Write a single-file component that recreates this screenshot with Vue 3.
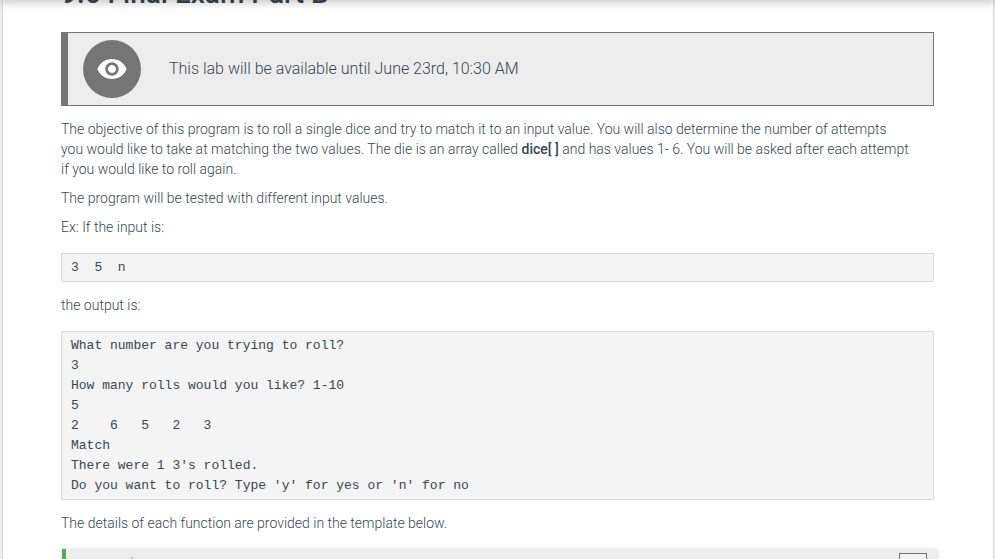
<template>
  <div class="page">
    <header class="top-bar"></header>
    <main class="content">
      <h1 class="title">9.6 Final Exam Part B</h1>

      <div class="notice">
        <div class="notice-icon">
          <svg viewBox="0 0 24 24" width="32" height="32" fill="#fff" aria-hidden="true">
            <path d="M12 4.5C7 4.5 2.73 7.61 1 12c1.73 4.39 6 7.5 11 7.5s9.27-3.11 11-7.5c-1.73-4.39-6-7.5-11-7.5zM12 17c-2.76 0-5-2.24-5-5s2.24-5 5-5 5 2.24 5 5-2.24 5-5 5zm0-8c-1.66 0-3 1.34-3 3s1.34 3 3 3 3-1.34 3-3-1.34-3-3-3z" />
          </svg>
        </div>
        <span class="notice-text">This lab will be available until June 23rd, 10:30 AM</span>
      </div>

      <p>
        The objective of this program is to roll a single dice and try to match it to an input value.
        You will also determine the number of attempts<br>
        you would like to take at matching the two values.
        The die is an array called <b>dice[ ]</b> and has values 1- 6.
        You will be asked after each attempt<br>
        if you would like to roll again.
      </p>
      <p>The program will be tested with different input values.</p>
      <p>Ex: If the input is:</p>
      <pre class="console">{{ sampleInput }}</pre>
      <p>the output is:</p>
      <pre class="console">{{ sampleOutput }}</pre>
      <p>The details of each function are provided in the template below.</p>

      <section class="activity">
        <span class="divider"></span>
        <span class="score"></span>
      </section>
    </main>
  </div>
</template>

<script setup>
const sampleInput = '3  5  n'

const sampleOutput = [
  'What number are you trying to roll?',
  '3',
  'How many rolls would you like? 1-10',
  '5',
  '2    6   5   2   3',
  'Match',
  "There were 1 3's rolled.",
  "Do you want to roll? Type 'y' for yes or 'n' for no"
].join('\n')
</script>

<style>
body {
  margin: 0;
  background: #f0f0f0;
}
</style>

<style scoped>
.page {
  height: 100vh;
  overflow: hidden;
  box-sizing: border-box;
  padding: 0 2px 0 3px;
  font-family: Roboto, "Liberation Sans", sans-serif;
  font-weight: 300;
  color: #37474f;
}
.top-bar {
  position: fixed;
  top: -10px;
  left: 0;
  right: 0;
  height: 10px;
  box-shadow: 0 2px 10px rgba(0, 0, 0, 0.26);
}
.content {
  box-sizing: border-box;
  min-height: 100%;
  padding: 0 59px 0 58px;
  background: #fff;
  box-shadow: 0 0 2px rgba(0, 0, 0, 0.3);
  display: flow-root;
}
.title {
  margin: -22px 0 22px;
  font-size: 28px;
  line-height: 32px;
  font-weight: 500;
}
.notice {
  display: flex;
  align-items: center;
  height: 72px;
  margin-bottom: 13px;
  padding-left: 15px;
  background: #ededed;
  border: 1px solid #757575;
  border-left-width: 7px;
}
.notice-icon {
  display: flex;
  align-items: center;
  justify-content: center;
  width: 58px;
  height: 58px;
  margin-right: 28px;
  border-radius: 50%;
  background: #757575;
}
.notice-text {
  font-size: 16px;
  line-height: 20px;
}
p {
  margin: 0 0 9px;
  font-size: 14px;
  line-height: 20px;
}
b {
  font-weight: 500;
}
.console {
  margin: 16px 0 13px;
  padding: 4px 9px 3px;
  border: 1px solid #d9d9d9;
  border-radius: 1px;
  background: #f4f4f4;
  font-family: "Liberation Mono", monospace;
  font-size: 13px;
  font-weight: 400;
  line-height: 20px;
}
.activity {
  display: flex;
  justify-content: space-between;
  height: 60px;
  margin: 16px -3px 0 1px;
  padding: 4px 10px 0 65px;
  border-left: 4px solid #4caf50;
  background: #ededed;
  box-shadow: 0 1px 5px rgba(0, 0, 0, 0.15);
}
.divider {
  width: 2px;
  height: 26px;
  margin-top: 4px;
  background: #bdbdbd;
}
.score {
  width: 26px;
  height: 28px;
  border: 1px solid #757575;
  background: #f2f2f2;
}
</style>
